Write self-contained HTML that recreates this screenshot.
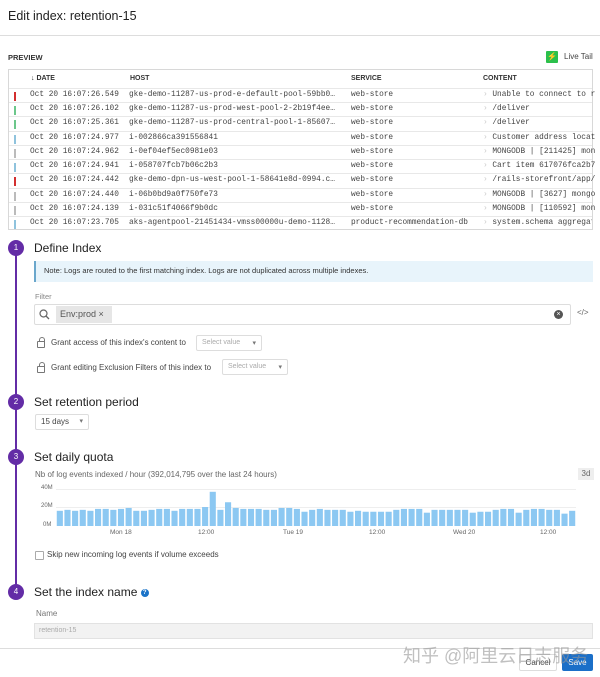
<!DOCTYPE html>
<html><head><meta charset="utf-8"><style>
*{box-sizing:border-box;margin:0;padding:0}
body{width:600px;height:677px;background:#fff;font-family:"Liberation Sans","Noto Sans CJK SC",sans-serif;color:#333;position:relative;overflow:hidden;font-size:8px}
.a{position:absolute;white-space:nowrap}
.mono{font-family:"Liberation Mono",monospace;font-size:7.8px;color:#444}
.row{position:absolute;left:9px;width:583px;height:14px;border-top:1px solid #e8e8e8}
.bar{position:absolute;left:5px;top:3px;width:2px;height:9px}
.step{position:absolute;left:8px;width:16px;height:16px;border-radius:50%;background:#632ca6;color:#fff;font-size:8px;text-align:center;line-height:16px}
.h{position:absolute;left:34px;font-size:12px;color:#222}
.sel{position:absolute;border:1px solid #ddd;border-radius:2px;background:#fff;font-size:7px;color:#aaa;padding:3px 5px}
.lock{position:absolute;width:8px;height:7px;border:1px solid #777;border-radius:1px}
.lock:before{content:"";position:absolute;left:1px;top:-5px;width:4px;height:4px;border:1px solid #777;border-bottom:none;border-radius:3px 3px 0 0}
</style></head><body>
<div class="a" style="left:8px;top:9px;font-size:12.5px;color:#222">Edit index: retention-15</div>
<div class="a" style="left:0;top:35px;width:600px;border-top:1px solid #ddd"></div>
<div class="a" style="left:8px;top:53px;font-size:7.5px;font-weight:bold;color:#333">PREVIEW</div>
<div class="a" style="left:546px;top:51px;width:12px;height:12px;background:#2bc04c;border-radius:1px;color:#fff;font-size:8px;text-align:center;line-height:12px">⚡</div>
<div class="a" style="left:564px;top:52px;font-size:8px;color:#444">Live Tail</div>
<div class="a" style="left:8px;top:69px;width:585px;height:161px;border:1px solid #d8d8d8;overflow:hidden">
<div class="a" style="left:22px;top:5px;font-size:7px;font-weight:bold;color:#333">↓ DATE</div>
<div class="a" style="left:121px;top:5px;font-size:7px;font-weight:bold;color:#333">HOST</div>
<div class="a" style="left:342px;top:5px;font-size:7px;font-weight:bold;color:#333">SERVICE</div>
<div class="a" style="left:474px;top:5px;font-size:7px;font-weight:bold;color:#333">CONTENT</div>
</div>
<div style="position:absolute;left:0;top:0">
<div class="row" style="top:88px"><div class="bar" style="background:#d32f2f"></div><span class="a mono" style="left:21px;top:2px">Oct 20 16:07:26.549</span><span class="a mono" style="left:120px;top:2px">gke-demo-11287-us-prod-e-default-pool-59bb0…</span><span class="a mono" style="left:342px;top:2px">web-store</span><span class="a mono" style="left:474px;top:2px"><span style="color:#ccc">›</span> Unable to connect to r</span></div>
<div class="row" style="top:102px"><div class="bar" style="background:#6cc78b"></div><span class="a mono" style="left:21px;top:2px">Oct 20 16:07:26.102</span><span class="a mono" style="left:120px;top:2px">gke-demo-11287-us-prod-west-pool-2-2b19f4ee…</span><span class="a mono" style="left:342px;top:2px">web-store</span><span class="a mono" style="left:474px;top:2px"><span style="color:#ccc">›</span> /deliver</span></div>
<div class="row" style="top:116px"><div class="bar" style="background:#6cc78b"></div><span class="a mono" style="left:21px;top:2px">Oct 20 16:07:25.361</span><span class="a mono" style="left:120px;top:2px">gke-demo-11287-us-prod-central-pool-1-85607…</span><span class="a mono" style="left:342px;top:2px">web-store</span><span class="a mono" style="left:474px;top:2px"><span style="color:#ccc">›</span> /deliver</span></div>
<div class="row" style="top:131px"><div class="bar" style="background:#8fc3dd"></div><span class="a mono" style="left:21px;top:2px">Oct 20 16:07:24.977</span><span class="a mono" style="left:120px;top:2px">i-002866ca391556841</span><span class="a mono" style="left:342px;top:2px">web-store</span><span class="a mono" style="left:474px;top:2px"><span style="color:#ccc">›</span> Customer address locat</span></div>
<div class="row" style="top:145px"><div class="bar" style="background:#bbb"></div><span class="a mono" style="left:21px;top:2px">Oct 20 16:07:24.962</span><span class="a mono" style="left:120px;top:2px">i-0ef04ef5ec0981e03</span><span class="a mono" style="left:342px;top:2px">web-store</span><span class="a mono" style="left:474px;top:2px"><span style="color:#ccc">›</span> MONGODB | [211425] mon</span></div>
<div class="row" style="top:159px"><div class="bar" style="background:#8fc3dd"></div><span class="a mono" style="left:21px;top:2px">Oct 20 16:07:24.941</span><span class="a mono" style="left:120px;top:2px">i-058707fcb7b06c2b3</span><span class="a mono" style="left:342px;top:2px">web-store</span><span class="a mono" style="left:474px;top:2px"><span style="color:#ccc">›</span> Cart item 617076fca2b7</span></div>
<div class="row" style="top:173px"><div class="bar" style="background:#d32f2f"></div><span class="a mono" style="left:21px;top:2px">Oct 20 16:07:24.442</span><span class="a mono" style="left:120px;top:2px">gke-demo-dpn-us-west-pool-1-58641e8d-0994.c…</span><span class="a mono" style="left:342px;top:2px">web-store</span><span class="a mono" style="left:474px;top:2px"><span style="color:#ccc">›</span> /rails-storefront/app/</span></div>
<div class="row" style="top:188px"><div class="bar" style="background:#bbb"></div><span class="a mono" style="left:21px;top:2px">Oct 20 16:07:24.440</span><span class="a mono" style="left:120px;top:2px">i-06b0bd9a0f750fe73</span><span class="a mono" style="left:342px;top:2px">web-store</span><span class="a mono" style="left:474px;top:2px"><span style="color:#ccc">›</span> MONGODB | [3627] mongo</span></div>
<div class="row" style="top:202px"><div class="bar" style="background:#bbb"></div><span class="a mono" style="left:21px;top:2px">Oct 20 16:07:24.139</span><span class="a mono" style="left:120px;top:2px">i-031c51f4066f9b0dc</span><span class="a mono" style="left:342px;top:2px">web-store</span><span class="a mono" style="left:474px;top:2px"><span style="color:#ccc">›</span> MONGODB | [110592] mon</span></div>
<div class="row" style="top:216px;height:13px;overflow:hidden"><div class="bar" style="background:#8fc3dd"></div><span class="a mono" style="left:21px;top:2px">Oct 20 16:07:23.705</span><span class="a mono" style="left:120px;top:2px">aks-agentpool-21451434-vmss00000u-demo-1128…</span><span class="a mono" style="left:342px;top:2px">product-recommendation-db</span><span class="a mono" style="left:474px;top:2px"><span style="color:#ccc">›</span> system.schema aggregat</span></div>
</div>

<div class="a" style="left:15px;top:248px;width:2px;height:345px;background:#632ca6"></div>
<div class="step" style="top:240px">1</div>
<div class="h" style="top:241px">Define Index</div>
<div class="a" style="left:34px;top:261px;width:559px;height:21px;background:#e8f4fb;border-left:2px solid #6aa7cc"></div>
<div class="a" style="left:44px;top:266px;font-size:7.5px;color:#333">Note: Logs are routed to the first matching index. Logs are not duplicated across multiple indexes.</div>
<div class="a" style="left:35px;top:292px;font-size:7.5px;color:#888">Filter</div>
<div class="a" style="left:34px;top:304px;width:537px;height:21px;border:1px solid #ddd;border-radius:2px"></div>
<svg class="a" style="left:39px;top:309px" width="11" height="11" viewBox="0 0 11 11"><circle cx="4.5" cy="4.5" r="3.5" fill="none" stroke="#666" stroke-width="1.2"/><path d="M7 7l3 3" stroke="#666" stroke-width="1.3"/></svg>
<div class="a" style="left:56px;top:306px;width:56px;height:17px;background:#e6e6e6;font-size:9px;color:#555;padding:3px 4px">Env:prod ×</div>
<div class="a" style="left:554px;top:310px;width:9px;height:9px;border-radius:50%;background:#555;color:#fff;font-size:7px;text-align:center;line-height:9px">×</div>
<div class="a" style="left:577px;top:308px;font-size:8px;color:#666">&lt;/&gt;</div>
<div class="lock" style="left:37px;top:341px"></div>
<div class="a" style="left:51px;top:338px;font-size:8px;color:#444">Grant access of this index's content to</div>
<div class="sel" style="left:196px;top:335px;width:66px;height:16px">Select value <span style="float:right;color:#777">▾</span></div>
<div class="lock" style="left:37px;top:366px"></div>
<div class="a" style="left:51px;top:363px;font-size:8px;color:#444">Grant editing Exclusion Filters of this index to</div>
<div class="sel" style="left:222px;top:359px;width:66px;height:16px">Select value <span style="float:right;color:#777">▾</span></div>

<div class="step" style="top:394px">2</div>
<div class="h" style="top:395px">Set retention period</div>
<div class="sel" style="left:35px;top:414px;width:54px;height:16px;color:#444;font-size:8px;padding:2px 5px">15 days <span style="float:right;color:#777;font-size:7px">▾</span></div>

<div class="step" style="top:449px">3</div>
<div class="h" style="top:450px">Set daily quota</div>
<div class="a" style="left:35px;top:470px;font-size:8px;color:#666">Nb of log events indexed / hour (392,014,795 over the last 24 hours)</div>
<div class="a" style="left:578px;top:468px;width:16px;height:12px;background:#eee;font-size:8px;color:#666;text-align:center;line-height:12px">3d</div>
<div class="a" style="left:41px;top:485px;font-size:6px;color:#666">40M</div>
<div class="a" style="left:41px;top:503px;font-size:6px;color:#666">20M</div>
<div class="a" style="left:43px;top:522px;font-size:6px;color:#666">0M</div>
<div class="a" style="left:56px;top:489px;width:520px;border-top:1px solid #eee"></div>
<div class="a" style="left:56px;top:507px;width:520px;border-top:1px solid #eee"></div>
<svg class="a" style="left:56px;top:488px" width="520" height="38" viewBox="0 0 68 40" preserveAspectRatio="none" fill="#8cc8f2">
<rect x="0.1" y="24" width="0.8" height="16"/><rect x="1.1" y="23" width="0.8" height="17"/><rect x="2.1" y="24" width="0.8" height="16"/><rect x="3.1" y="23" width="0.8" height="17"/><rect x="4.1" y="24" width="0.8" height="16"/><rect x="5.1" y="22" width="0.8" height="18"/><rect x="6.1" y="22" width="0.8" height="18"/><rect x="7.1" y="23" width="0.8" height="17"/><rect x="8.1" y="22" width="0.8" height="18"/><rect x="9.1" y="21" width="0.8" height="19"/><rect x="10.1" y="24" width="0.8" height="16"/><rect x="11.1" y="24" width="0.8" height="16"/><rect x="12.1" y="23" width="0.8" height="17"/><rect x="13.1" y="22" width="0.8" height="18"/><rect x="14.1" y="22" width="0.8" height="18"/><rect x="15.1" y="24" width="0.8" height="16"/><rect x="16.1" y="22" width="0.8" height="18"/><rect x="17.1" y="22" width="0.8" height="18"/><rect x="18.1" y="22" width="0.8" height="18"/><rect x="19.1" y="20" width="0.8" height="20"/><rect x="20.1" y="4" width="0.8" height="36"/><rect x="21.1" y="23" width="0.8" height="17"/><rect x="22.1" y="15" width="0.8" height="25"/><rect x="23.1" y="21" width="0.8" height="19"/><rect x="24.1" y="22" width="0.8" height="18"/><rect x="25.1" y="22" width="0.8" height="18"/><rect x="26.1" y="22" width="0.8" height="18"/><rect x="27.1" y="23" width="0.8" height="17"/><rect x="28.1" y="23" width="0.8" height="17"/><rect x="29.1" y="21" width="0.8" height="19"/><rect x="30.1" y="21" width="0.8" height="19"/><rect x="31.1" y="22" width="0.8" height="18"/><rect x="32.1" y="25" width="0.8" height="15"/><rect x="33.1" y="23" width="0.8" height="17"/><rect x="34.1" y="22" width="0.8" height="18"/><rect x="35.1" y="23" width="0.8" height="17"/><rect x="36.1" y="23" width="0.8" height="17"/><rect x="37.1" y="23" width="0.8" height="17"/><rect x="38.1" y="25" width="0.8" height="15"/><rect x="39.1" y="24" width="0.8" height="16"/><rect x="40.1" y="25" width="0.8" height="15"/><rect x="41.1" y="25" width="0.8" height="15"/><rect x="42.1" y="25" width="0.8" height="15"/><rect x="43.1" y="25" width="0.8" height="15"/><rect x="44.1" y="23" width="0.8" height="17"/><rect x="45.1" y="22" width="0.8" height="18"/><rect x="46.1" y="22" width="0.8" height="18"/><rect x="47.1" y="22" width="0.8" height="18"/><rect x="48.1" y="26" width="0.8" height="14"/><rect x="49.1" y="23" width="0.8" height="17"/><rect x="50.1" y="23" width="0.8" height="17"/><rect x="51.1" y="23" width="0.8" height="17"/><rect x="52.1" y="23" width="0.8" height="17"/><rect x="53.1" y="23" width="0.8" height="17"/><rect x="54.1" y="26" width="0.8" height="14"/><rect x="55.1" y="25" width="0.8" height="15"/><rect x="56.1" y="25" width="0.8" height="15"/><rect x="57.1" y="23" width="0.8" height="17"/><rect x="58.1" y="22" width="0.8" height="18"/><rect x="59.1" y="22" width="0.8" height="18"/><rect x="60.1" y="26" width="0.8" height="14"/><rect x="61.1" y="23" width="0.8" height="17"/><rect x="62.1" y="22" width="0.8" height="18"/><rect x="63.1" y="22" width="0.8" height="18"/><rect x="64.1" y="23" width="0.8" height="17"/><rect x="65.1" y="23" width="0.8" height="17"/><rect x="66.1" y="27" width="0.8" height="13"/><rect x="67.1" y="24" width="0.8" height="16"/>
</svg>
<div class="a" style="left:110px;top:529px;font-size:6.5px;color:#666">Mon 18</div>
<div class="a" style="left:198px;top:529px;font-size:6.5px;color:#666">12:00</div>
<div class="a" style="left:283px;top:529px;font-size:6.5px;color:#666">Tue 19</div>
<div class="a" style="left:369px;top:529px;font-size:6.5px;color:#666">12:00</div>
<div class="a" style="left:453px;top:529px;font-size:6.5px;color:#666">Wed 20</div>
<div class="a" style="left:540px;top:529px;font-size:6.5px;color:#666">12:00</div>
<div class="a" style="left:35px;top:551px;width:9px;height:9px;border:1px solid #aaa;border-radius:1px"></div>
<div class="a" style="left:47px;top:550px;font-size:8px;color:#444">Skip new incoming log events if volume exceeds</div>

<div class="step" style="top:584px">4</div>
<div class="h" style="top:585px">Set the index name <span style="display:inline-block;width:8px;height:8px;border-radius:50%;background:#1a73c8;color:#fff;font-size:6px;text-align:center;line-height:8px;vertical-align:2px;font-weight:bold">?</span></div>
<div class="a" style="left:36px;top:609px;font-size:8px;color:#777">Name</div>
<div class="a" style="left:34px;top:623px;width:559px;height:16px;background:#f2f2f2;border:1px solid #e2e2e2;font-size:7px;color:#aaa;padding:3px 4px">retention-15</div>
<div class="a" style="left:0;top:648px;width:600px;border-top:1px solid #ddd"></div>
<div class="a" style="left:519px;top:654px;width:38px;height:17px;border:1px solid #ddd;border-radius:2px;font-size:8px;color:#444;text-align:center;line-height:15px;background:#fff">Cancel</div>
<div class="a" style="left:562px;top:654px;width:31px;height:17px;background:#1b6fc8;border-radius:2px;font-size:8px;color:#fff;text-align:center;line-height:17px">Save</div>
<div class="a" style="left:403px;top:642px;font-size:18px;color:rgba(150,150,150,0.6)">知乎 @阿里云日志服务</div>
</body></html>
